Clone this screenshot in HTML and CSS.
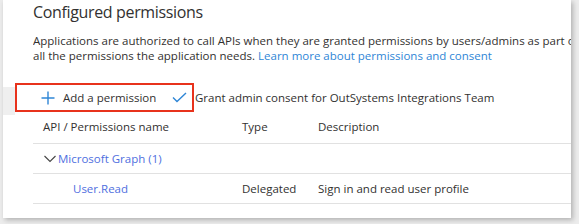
FILE: index.html
```html
<!DOCTYPE html>
<html>
<head>
<meta charset="utf-8">
<link rel="stylesheet" href="styles.css">
</head>
<body>
<div class="card">
  <h2 class="title">Configured permissions</h2>
  <p class="desc">
    <span class="line">Applications are authorized to call APIs when they are granted permissions by users/admins as part of the consent process. The list of configured permissions should include</span>
    <span class="line">all the permissions the application needs. <a class="link" href="#">Learn more about permissions and consent</a></span>
  </p>
  <div class="toolbar">
    <div class="hl"></div>
    <div class="redbox">
      <span class="btn">
        <svg class="ico-plus" width="14" height="14" viewBox="0 0 14 14"><path d="M7 0.5V13.5M0.5 7H13.5" stroke="#2f86d6" stroke-width="1.4" fill="none"/></svg>
        <span>Add a permission</span>
      </span>
      <svg class="ico-check" width="15" height="11" viewBox="0 0 15 11"><path d="M1 5.5L5 9.5L14 1" stroke="#2f86d6" stroke-width="1.4" fill="none"/></svg>
    </div>
    <span class="grant">Grant admin consent for OutSystems Integrations Team</span>
  </div>
  <div class="table">
    <div class="row head">
      <div class="c1">API / Permissions name</div>
      <div class="c2">Type</div>
      <div class="c3">Description</div>
    </div>
    <div class="row">
      <div class="c1 group">
        <svg class="chev" width="12" height="8" viewBox="0 0 12 8"><path d="M0.5 1L6 6.5L11.5 1" stroke="#444" stroke-width="1.1" fill="none"/></svg>
        <span class="blue">Microsoft Graph (1)</span>
      </div>
    </div>
    <div class="row">
      <div class="c1 item"><span class="blue">User.Read</span></div>
      <div class="c2">Delegated</div>
      <div class="c3">Sign in and read user profile</div>
    </div>
  </div>
</div>
</body>
</html>
```
FILE: styles.css
```css
html, body {
  margin: 0;
  padding: 0;
}
body {
  background: #ececec;
  width: 579px;
  height: 224px;
  overflow: hidden;
  font-family: "Open Sans", "Noto Sans", sans-serif;
  color: #323130;
}
.card {
  margin-left: 3px;
  width: 538px;
  height: 218px;
  background: #fff;
  padding-left: 30px;
  box-shadow: 2px 2px 5px rgba(0,0,0,0.25);
  overflow: hidden;
}
.title {
  margin: 0;
  font-weight: 400;
  font-size: 16px;
  letter-spacing: -0.35px;
  line-height: 24px;
  color: #323130;
}
.desc {
  margin: 9px 0 0 0;
  font-size: 11.5px;
  line-height: 15px;
  height: 30px;
  overflow: hidden;
  color: #323130;
}
.line {
  display: block;
  white-space: nowrap;
}
.link {
  color: #2f86d6;
  text-decoration: none;
}
.toolbar {
  display: flex;
  align-items: flex-start;
  margin: 20px 0 0 -30px;
  height: 30px;
}
.hl {
  width: 12px;
  height: 28px;
  margin-top: 4px;
  background: #efefef;
}
.redbox {
  width: 175px;
  height: 25px;
  border: 2px solid #e8321c;
  display: flex;
  align-items: center;
}
.btn {
  display: flex;
  align-items: center;
  margin-left: 24px;
  font-size: 11.5px;
}
.ico-plus {
  margin-right: 8px;
}
.ico-check {
  margin-left: 16px;
}
.grant {
  font-size: 11.5px;
  line-height: 29px;
  margin-left: 1px;
}
.table {
  margin-top: 1px;
}
.row {
  display: flex;
  height: 29px;
  align-items: center;
  border-bottom: 1px solid #e1e1e1;
  font-size: 11.5px;
}
.head {
  font-weight: 500;
  box-sizing: border-box;
  height: 30px;
  padding-bottom: 4px;
}
.c1 {
  width: 199px;
  padding-left: 10px;
  display: flex;
  align-items: center;
}
.c2 {
  width: 76px;
}
.c3 {
  flex: 1;
}
.group {
  padding-left: 11px;
}
.chev {
  margin-right: 2px;
}
.item {
  padding-left: 40px;
  width: 169px;
}
.blue {
  color: #4f6fe0;
}
```
